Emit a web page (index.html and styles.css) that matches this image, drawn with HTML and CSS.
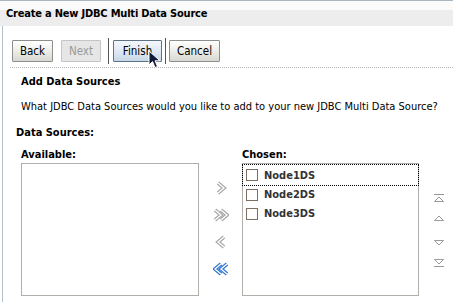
FILE: index.html
```html
<!DOCTYPE html>
<html lang="en">
<head>
    <meta charset="UTF-8">
    <title>Create a New JDBC Multi Data Source</title>
    <link rel="stylesheet" href="styles.css">
</head>
<body>
    <div class="title">Create a New JDBC Multi Data Source</div>
    <div class="panel">
        <div class="toolbar">
            <button class="btn back">Back</button>
            <button class="btn disabled">Next</button>
            <span class="sep"></span>
            <button class="btn primary">Finish</button>
            <span class="sep"></span>
            <button class="btn cancel">Cancel</button>
            <!-- mouse pointer over Finish -->
            <svg class="cursor" width="14" height="20" viewBox="0 0 14 20">
                <path d="M1 1 L1 15 L4.5 11.5 L7 17.5 L9.5 16.5 L7 10.8 L12 10.8 Z" fill="#101838" stroke="#fff" stroke-width="1"/>
            </svg>
        </div>
        <div class="content">
            <h3>Add Data Sources</h3>
            <p class="intro">What JDBC Data Sources would you like to add to your new JDBC Multi Data Source?</p>
        </div>
        <div class="shuttle">
            <h4 class="shuttle-title">Data Sources:</h4>
            <div class="shuttle-body">
                <div class="list-col">
                    <div class="list-label">Available:</div>
                    <div class="list"></div>
                </div>
                <div class="moves">
                    <svg width="16" height="14" viewBox="0 0 16 14"><path d="M5 2 L11 7 L5 12" class="chev"/><path d="M5 2 L11 7 L5 12" class="chev-in"/></svg>
                    <svg width="16" height="14" viewBox="0 0 16 14"><path d="M2 2 L8 7 L2 12" class="chev"/><path d="M8 2 L14 7 L8 12" class="chev"/><path d="M2 2 L8 7 L2 12" class="chev-in"/><path d="M8 2 L14 7 L8 12" class="chev-in"/></svg>
                    <svg width="16" height="14" viewBox="0 0 16 14"><path d="M11 2 L5 7 L11 12" class="chev"/><path d="M11 2 L5 7 L11 12" class="chev-in"/></svg>
                    <svg width="16" height="14" viewBox="0 0 16 14"><path d="M8 2 L2 7 L8 12" class="chev blue"/><path d="M14 2 L8 7 L14 12" class="chev blue"/><path d="M8 2 L2 7 L8 12" class="chev-in"/><path d="M14 2 L8 7 L14 12" class="chev-in"/></svg>
                </div>
                <div class="list-col">
                    <div class="list-label">Chosen:</div>
                    <div class="list chosen">
                        <label class="item focus"><span class="box"></span>Node1DS</label>
                        <label class="item"><span class="box"></span>Node2DS</label>
                        <label class="item"><span class="box"></span>Node3DS</label>
                    </div>
                </div>
                <div class="order">
                    <svg width="12" height="10" viewBox="0 0 12 10"><path d="M1 1.5 H11" class="tri"/><path d="M1.5 8.5 L6 4 L10.5 8.5 Z" class="tri"/></svg>
                    <svg width="12" height="10" viewBox="0 0 12 10"><path d="M1.5 7.5 L6 3 L10.5 7.5 Z" class="tri"/></svg>
                    <svg class="gap" width="12" height="10" viewBox="0 0 12 10"><path d="M1.5 2.5 L6 7 L10.5 2.5 Z" class="tri"/></svg>
                    <svg width="12" height="10" viewBox="0 0 12 10"><path d="M1.5 1.5 L6 6 L10.5 1.5 Z" class="tri"/><path d="M1 8.5 H11" class="tri"/></svg>
                </div>
            </div>
        </div>
    </div>
</body>
</html>
```

FILE: styles.css
```css
* {
    margin: 0;
    padding: 0;
    box-sizing: border-box;
}

body {
    font-family: "DejaVu Sans Condensed", "DejaVu Sans", sans-serif;
    font-size: 11px;
    color: #000;
    background: #fff;
    height: 302px;
    overflow: hidden;
}

.title {
    height: 26px;
    border-top: 1px solid #a9b7c2;
    background: linear-gradient(to bottom, #fbfbfb 0, #fbfbfb 9px, #ededed 9px, #ededed 25px, #fff 25px);
    font-weight: bold;
    font-size: 11px;
    letter-spacing: -0.2px;
    line-height: 25px;
    padding-left: 6px;
}

.panel {
    margin-left: 2px;
    border-left: 1px solid #b3c1cb;
    height: 276px;
}

.toolbar {
    display: flex;
    align-items: center;
    height: 42px;
    padding: 8px 0 0 2px;
    margin-left: 7px;
    border-bottom: 1px dotted #b5b5b5;
    position: relative;
}

.btn {
    font-family: inherit;
    font-size: 11.5px;
    width: 41px;
    height: 22px;
    padding: 0;
    border: 1px solid #8d8d8d;
    border-radius: 1px;
    background: linear-gradient(to bottom, #ffffff, #e9e9e4 60%, #d8d8d2);
    color: #000;
    margin-right: 8px;
}

.btn.disabled {
    width: 40px;
    color: #9a9a9a;
    border-color: #c4c4c4;
    background: #e6e6e6;
    margin-right: 7px;
}

.btn.primary {
    width: 49px;
    border-color: #5f7386;
    background: linear-gradient(to bottom, #f4f8fc, #dbe6f2 60%, #c7d6e6);
    margin-right: 3px;
}

.btn.cancel {
    width: 51px;
}

.sep {
    width: 1px;
    height: 26px;
    background: #555;
    margin-right: 4px;
}

.sep + .btn.cancel {
    margin-left: -1px;
}

.cursor {
    position: absolute;
    left: 138px;
    top: 24px;
}

.content {
    padding: 7px 0 0 18px;
}

h3 {
    font-size: 11px;
    font-weight: bold;
    line-height: 14px;
}

.intro {
    margin-top: 11px;
    line-height: 14px;
}

.shuttle {
    padding: 12px 0 0 13px;
}

.shuttle-title {
    font-size: 11px;
    font-weight: bold;
    line-height: 14px;
}

.shuttle-body {
    display: flex;
    padding-left: 5px;
    margin-top: 8px;
}

.list-label {
    font-weight: bold;
    line-height: 14px;
}

.list {
    width: 178px;
    height: 133px;
    border: 1px solid #b0b0aa;
    margin-top: 1px;
}

.list.chosen {
    width: 177px;
    padding-top: 1px;
}

.moves {
    width: 43px;
    display: flex;
    flex-direction: column;
    align-items: center;
    gap: 13px;
    padding-top: 33px;
}

.chev {
    fill: none;
    stroke: #a8a8a8;
    stroke-width: 3.6;
    stroke-linejoin: miter;
}

.chev.blue {
    stroke: #2f77d0;
}

.chev-in {
    fill: none;
    stroke: #fff;
    stroke-width: 1.3;
}

.item {
    display: flex;
    align-items: center;
    height: 19px;
    padding-left: 3px;
    font-weight: bold;
    color: #333;
}

.item.focus {
    outline: 1px dotted #000;
    outline-offset: 0;
    height: 20px;
}

.box {
    width: 12px;
    height: 12px;
    border: 1px solid #7a6f62;
    margin-right: 6px;
}

.order {
    display: flex;
    flex-direction: column;
    gap: 10px;
    padding: 45px 0 0 14px;
}

.order .gap {
    margin-top: 5px;
}

.tri {
    fill: none;
    stroke: #9a9a9a;
    stroke-width: 1;
}
```
